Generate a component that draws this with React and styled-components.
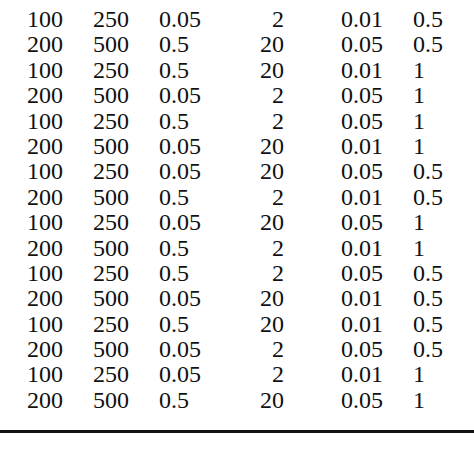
import React from 'react'
import styled, { createGlobalStyle } from 'styled-components'

const rows = [
  ['100', '250', '0.05', '2', '0.01', '0.5'],
  ['200', '500', '0.5', '20', '0.05', '0.5'],
  ['100', '250', '0.5', '20', '0.01', '1'],
  ['200', '500', '0.05', '2', '0.05', '1'],
  ['100', '250', '0.5', '2', '0.05', '1'],
  ['200', '500', '0.05', '20', '0.01', '1'],
  ['100', '250', '0.05', '20', '0.05', '0.5'],
  ['200', '500', '0.5', '2', '0.01', '0.5'],
  ['100', '250', '0.05', '20', '0.05', '1'],
  ['200', '500', '0.5', '2', '0.01', '1'],
  ['100', '250', '0.5', '2', '0.05', '0.5'],
  ['200', '500', '0.05', '20', '0.01', '0.5'],
  ['100', '250', '0.5', '20', '0.01', '0.5'],
  ['200', '500', '0.05', '2', '0.05', '0.5'],
  ['100', '250', '0.05', '2', '0.01', '1'],
  ['200', '500', '0.5', '20', '0.05', '1']
]

const GlobalStyle = createGlobalStyle`
  html, body {
    margin: 0;
    padding: 0;
    background: #fff;
  }
`

export default function App () {
  return (
    <Page>
      <GlobalStyle />
      <Table>
        {rows.map((row, i) => (
          <Row key={i}>
            {row.map((v, j) => (
              <Cell key={j} right={j === 3} indent={j === 4}>{v}</Cell>
            ))}
          </Row>
        ))}
      </Table>
      <Rule />
    </Page>
  )
}

const Page = styled.div`
  width: 474px;
  height: 474px;
  background: #fff;
  font-family: 'Liberation Serif', 'Times New Roman', serif;
  color: #111;
  overflow: hidden;
`

const Table = styled.div`
  padding: 7px 0 0 27px;
`

const Row = styled.div`
  display: grid;
  grid-template-columns: 66px 66px 80px 45px 129px auto;
  height: 25.4px;
  font-size: 24px;
  line-height: 25.4px;
`

const Cell = styled.div`
  white-space: nowrap;
  text-align: ${p => (p.right ? 'right' : 'left')};
  padding-left: ${p => (p.indent ? '57px' : '0')};
`

const Rule = styled.div`
  margin-top: 17px;
  height: 3px;
  background: #111;
`
